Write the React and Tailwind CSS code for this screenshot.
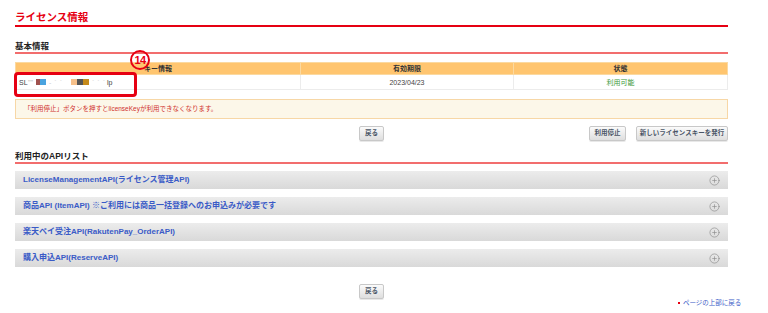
import { CirclePlus } from 'lucide-react'

const font = { fontFamily: '"Liberation Sans", "Noto Sans CJK JP", sans-serif' }

function Btn({ children, className = '' }) {
  return (
    <button
      className={`h-[15px] whitespace-nowrap rounded-[2px] border border-[#c8c8c8] bg-gradient-to-b from-[#fbfbfb] to-[#dedede] text-[6.5px] font-bold text-[#4a5566] leading-none shadow-[0_1px_0_#e8e8e8] ${className}`}
    >
      {children}
    </button>
  )
}

const apis = [
  'LicenseManagementAPI(ライセンス管理API)',
  '商品API (ItemAPI) ※ご利用には商品一括登録へのお申込みが必要です',
  '楽天ペイ受注API(RakutenPay_OrderAPI)',
  '購入申込API(ReserveAPI)',
]

export default function App() {
  return (
    <div className="w-[768px] h-[313px] bg-white relative overflow-hidden" style={font}>
      <div className="ml-[15px] w-[713px]">
        {/* title */}
        <div className="pt-[10px] border-b-2 border-[#e60012]">
          <h1 className="text-[10.5px] font-bold text-[#e60012] leading-[15px]">ライセンス情報</h1>
        </div>

        {/* basic info */}
        <div className="mt-[13px] border-b-2 border-[#f26d6d]">
          <h2 className="text-[8.5px] font-bold text-[#222] leading-[12px]">基本情報</h2>
        </div>

        <table className="mt-[8px] w-full border-collapse text-[7px] leading-none">
          <thead>
            <tr className="bg-[#ffc56f]">
              <th className="w-[285px] h-[12px] p-0 border border-[#fbd9a0] font-bold text-[#333]">キー情報</th>
              <th className="w-[213px] h-[12px] p-0 border border-[#fbd9a0] font-bold text-[#333]">有効期限</th>
              <th className="h-[12px] p-0 border border-[#fbd9a0] font-bold text-[#333]">状態</th>
            </tr>
          </thead>
          <tbody>
            <tr>
              <td className="h-[15px] p-0 border border-[#ececec] pl-[3px] text-[#444]">
                <div className="flex items-center">
                  <span className="w-[9px]">SL</span>
                  <span className="w-[8px] text-[#bbb]">""</span>
                  <span className="w-[4px] h-[6px] bg-[#a0524f]" />
                  <span className="w-[6px] h-[6px] bg-[#4aa3df]" />
                  <span className="w-[25px] text-[#ccc] tracking-[3px] pl-[3px]">-``</span>
                  <span className="w-[6px] h-[6px] bg-[#f6c08a]" />
                  <span className="w-[6px] h-[6px] bg-[#555]" />
                  <span className="w-[6px] h-[6px] bg-[#c58a1a]" />
                  <span className="w-[18px] text-[#ccc] tracking-[3px] pl-[3px]">```</span>
                  <span>lp</span>
                </div>
              </td>
              <td className="h-[15px] p-0 border border-[#ececec] text-center text-[#444]">2023/04/23</td>
              <td className="h-[15px] p-0 border border-[#ececec] text-center text-[#3a9a3a]">利用可能</td>
            </tr>
          </tbody>
        </table>

        {/* notice */}
        <div className="mt-[9px] h-[20px] flex items-center bg-[#fcf7e9] border border-[#f7d7a6] pl-[8px]">
          <p className="text-[6.5px] text-[#d0312d]">「利用停止」ボタンを押すとlicenseKeyが利用できなくなります。</p>
        </div>

        {/* buttons */}
        <div className="mt-[7px] relative flex justify-center h-[15px]">
          <Btn className="w-[25px]">戻る</Btn>
          <div className="absolute right-0 top-0 flex gap-[10px]">
            <Btn className="w-[37px]">利用停止</Btn>
            <Btn className="w-[92px]">新しいライセンスキーを発行</Btn>
          </div>
        </div>

        {/* api list */}
        <div className="mt-[9px] border-b-2 border-[#f26d6d]">
          <h2 className="text-[8.5px] font-bold text-[#222] leading-[12px]">利用中のAPIリスト</h2>
        </div>

        <div className="mt-[7px] flex flex-col gap-[8px]">
          {apis.map((a) => (
            <div
              key={a}
              className="h-[18px] flex items-center justify-between bg-gradient-to-b from-[#ececec] to-[#d9d9d9] pl-[8px] pr-[8px]"
            >
              <span className="text-[8px] font-bold text-[#3a5bc7]">{a}</span>
              <CirclePlus size={11} strokeWidth={1.4} color="#8a8a8a" />
            </div>
          ))}
        </div>

        <div className="mt-[17px] flex justify-center">
          <Btn className="w-[25px]">戻る</Btn>
        </div>
      </div>

      <div className="absolute left-[678px] top-[298px] flex items-center gap-[3px]">
        <span className="w-[2px] h-[2px] bg-[#e60012]" />
        <span className="text-[6.5px] text-[#3a5bc7]">ページの上部に戻る</span>
      </div>

      {/* annotation */}
      <div className="absolute left-[14px] top-[72px] w-[123px] h-[25px] border-[3px] border-[#e60012] rounded-[4px]" />
      <div className="absolute left-[130px] top-[50px] w-[20px] h-[20px] rounded-full border-2 border-[#e60012] flex items-center justify-center">
        <span className="text-[11px] font-bold leading-none text-[#e60012] tracking-[-0.5px]">14</span>
      </div>
    </div>
  )
}
